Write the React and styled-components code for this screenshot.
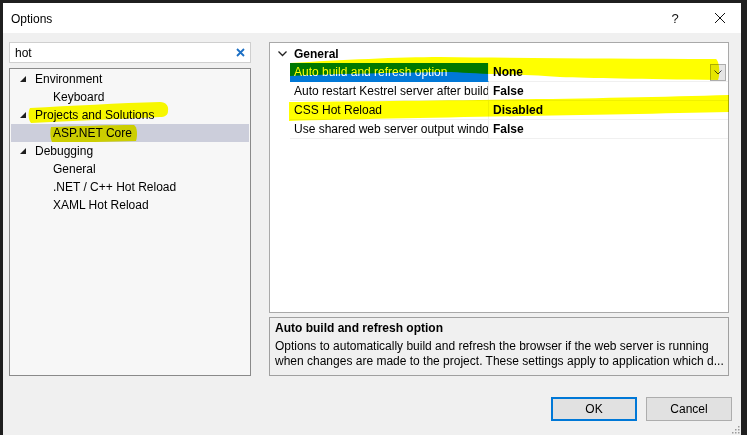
import React from "react";
import styled, { createGlobalStyle } from "styled-components";

const Global = createGlobalStyle`
  html, body { margin: 0; padding: 0; background: #1f1f1f; }
  body { font-family: "Liberation Sans", Arial, sans-serif; font-size: 12px; color: #000; }
  * { box-sizing: border-box; }
`;

const Screen = styled.div`
  position: relative;
  width: 747px;
  height: 435px;
  padding: 3px 6px 0 3px;
  overflow: hidden;
`;

const Dialog = styled.div`
  width: 738px;
  height: 432px;
  background: #f0f0f0;
  display: flex;
  flex-direction: column;
  position: relative;
`;

const TitleBar = styled.div`
  height: 30px;
  background: #ffffff;
  display: flex;
  align-items: center;
  padding-left: 8px;
  padding-right: 0;
`;

const TitleText = styled.div`
  flex: 1;
  font-size: 12px;
  padding-top: 1px;
`;

const TitleButton = styled.div`
  width: 45px;
  height: 30px;
  display: flex;
  align-items: center;
  justify-content: center;
  padding-left: ${(p) => p.$shift || 0}px;
  font-size: 13px;
  color: #111;
`;

const Body = styled.div`
  flex: 1;
  padding: 9px 12px 0 6px;
  display: flex;
  flex-direction: column;
`;

const Main = styled.div`
  display: grid;
  grid-template-columns: 242px 460px;
  column-gap: 18px;
  height: 334px;
`;

const Column = styled.div`
  display: flex;
  flex-direction: column;
  gap: ${(p) => p.$gap}px;
  min-height: 0;
`;

const Search = styled.div`
  height: 21px;
  background: #fff;
  border: 1px solid #cfcfcf;
  display: flex;
  align-items: center;
  padding: 0 5px 0 5px;
`;

const SearchText = styled.div`
  flex: 1;
  font-size: 12px;
`;

const Tree = styled.div`
  flex: 1;
  background: #f7f7f7;
  border: 1px solid #8a8a8a;
  padding: 1px 1px;
`;

const TreeRow = styled.div`
  height: 18px;
  display: flex;
  align-items: center;
  padding-left: ${(p) => (p.$child ? 42 : 0)}px;
  background: ${(p) => (p.$selected ? "#cccedb" : "transparent")};
  white-space: nowrap;
`;

const Expander = styled.span`
  width: 24px;
  height: 18px;
  display: flex;
  align-items: center;
  padding-left: 9px;
`;

const Grid = styled.div`
  flex: 1;
  background: #fff;
  border: 1px solid #a9a9a9;
  padding-top: 1px;
`;

const CategoryRow = styled.div`
  height: 19px;
  display: flex;
  align-items: center;
  font-weight: bold;
`;

const CategoryToggle = styled.span`
  width: 24px;
  display: flex;
  justify-content: center;
  padding-left: 1px;
`;

const PropRow = styled.div`
  height: 19px;
  display: grid;
  grid-template-columns: 20px 199px 1fr;
`;

const Margin = styled.div``;

const PropName = styled.div`
  display: flex;
  align-items: center;
  padding-left: 4px;
  white-space: nowrap;
  overflow: hidden;
  background: ${(p) => (p.$selected ? "#0078d7" : "transparent")};
  color: ${(p) => (p.$selected ? "#fff" : "#000")};
  border-bottom: 1px solid ${(p) => (p.$selected ? "#0078d7" : "#f0f0f0")};
  border-right: 1px solid #f0f0f0;
`;

const PropValue = styled.div`
  display: flex;
  align-items: center;
  padding-left: 4px;
  padding-right: 2px;
  font-weight: bold;
  border-bottom: 1px solid #f0f0f0;
`;

const ValueText = styled.span`
  flex: 1;
`;

const DropButton = styled.div`
  width: 16px;
  height: 17px;
  background: #e6e6e6;
  border: 1px solid #adadad;
  display: flex;
  align-items: center;
  justify-content: center;
`;

const Description = styled.div`
  height: 59px;
  border: 1px solid #a0a0a0;
  background: #f0f0f0;
  padding: 2px 5px 0 5px;
  line-height: 15px;
`;

const DescTitle = styled.div`
  font-weight: bold;
  height: 17px;
  line-height: 17px;
  margin-bottom: 2px;
`;

const DescLine = styled.div`
  white-space: nowrap;
  overflow: hidden;
`;

const ButtonRow = styled.div`
  margin-top: 21px;
  margin-right: -3px;
  display: flex;
  justify-content: flex-end;
  gap: 9px;
`;

const Button = styled.button`
  width: 86px;
  height: 24px;
  font-family: inherit;
  font-size: 12px;
  color: #000;
  background: #e1e1e1;
  border: ${(p) => (p.$default ? "2px solid #0078d7" : "1px solid #adadad")};
  padding: 0;
`;

const Grip = styled.svg`
  position: absolute;
  right: 1px;
  bottom: 1px;
`;

const Markers = styled.svg`
  position: absolute;
  left: 0;
  top: 0;
  pointer-events: none;
  mix-blend-mode: multiply;
`;

const Triangle = () => (
  <svg width="6" height="6" viewBox="0 0 6 6">
    <polygon points="6,0 6,6 0,6" fill="#1e1e1e" />
  </svg>
);

const treeItems = [
  { label: "Environment", parent: true },
  { label: "Keyboard" },
  { label: "Projects and Solutions", parent: true },
  { label: "ASP.NET Core", selected: true },
  { label: "Debugging", parent: true },
  { label: "General" },
  { label: ".NET / C++ Hot Reload" },
  { label: "XAML Hot Reload" },
];

const props = [
  { name: "Auto build and refresh option", value: "None", selected: true },
  { name: "Auto restart Kestrel server after build", value: "False" },
  { name: "CSS Hot Reload", value: "Disabled" },
  { name: "Use shared web server output window", value: "False" },
];

export default function App() {
  return (
    <>
      <Global />
      <Screen>
        <Dialog>
          <TitleBar>
            <TitleText>Options</TitleText>
            <TitleButton $shift={3}>?</TitleButton>
            <TitleButton $shift={3}>
              <svg width="12" height="12" viewBox="0 0 12 12">
                <path d="M1 1 L11 11 M11 1 L1 11" stroke="#111" strokeWidth="1" />
              </svg>
            </TitleButton>
          </TitleBar>
          <Body>
            <Main>
              <Column $gap={5}>
                <Search>
                  <SearchText>hot</SearchText>
                  <svg width="9" height="9" viewBox="0 0 9 9">
                    <path d="M1 1 L8 8 M8 1 L1 8" stroke="#1c6fc4" strokeWidth="1.8" />
                  </svg>
                </Search>
                <Tree>
                  {treeItems.map((it) =>
                    it.parent ? (
                      <TreeRow key={it.label}>
                        <Expander>
                          <Triangle />
                        </Expander>
                        {it.label}
                      </TreeRow>
                    ) : (
                      <TreeRow key={it.label} $child $selected={it.selected}>
                        {it.label}
                      </TreeRow>
                    )
                  )}
                </Tree>
              </Column>
              <Column $gap={4}>
                <Grid>
                  <CategoryRow>
                    <CategoryToggle>
                      <svg width="9" height="6" viewBox="0 0 9 6">
                        <path d="M0.5 0.5 L4.5 4.5 L8.5 0.5" stroke="#222" strokeWidth="1.3" fill="none" />
                      </svg>
                    </CategoryToggle>
                    General
                  </CategoryRow>
                  {props.map((p) => (
                    <PropRow key={p.name}>
                      <Margin />
                      <PropName $selected={p.selected}>{p.name}</PropName>
                      <PropValue>
                        <ValueText>{p.value}</ValueText>
                        {p.selected && (
                          <DropButton>
                            <svg width="8" height="5" viewBox="0 0 8 5">
                              <path d="M0.5 0.5 L4 4 L7.5 0.5" stroke="#444" strokeWidth="1" fill="none" />
                            </svg>
                          </DropButton>
                        )}
                      </PropValue>
                    </PropRow>
                  ))}
                </Grid>
                <Description>
                  <DescTitle>Auto build and refresh option</DescTitle>
                  <DescLine>
                    Options to automatically build and refresh the browser if the web server is running
                  </DescLine>
                  <DescLine>
                    when changes are made to the project. These settings apply to application which d...
                  </DescLine>
                </Description>
              </Column>
            </Main>
            <ButtonRow>
              <Button $default>OK</Button>
              <Button>Cancel</Button>
            </ButtonRow>
          </Body>
          <Grip width="8" height="8" viewBox="0 0 8 8">
            <g fill="#9a9a9a">
              <rect x="6" y="0" width="1.5" height="1.5" />
              <rect x="3" y="3" width="1.5" height="1.5" />
              <rect x="6" y="3" width="1.5" height="1.5" />
              <rect x="0" y="6" width="1.5" height="1.5" />
              <rect x="3" y="6" width="1.5" height="1.5" />
              <rect x="6" y="6" width="1.5" height="1.5" />
            </g>
          </Grip>
        </Dialog>
        <Markers width="747" height="435" viewBox="0 0 747 435">
          <g fill="#ffff00">
            <path d="M30,108 C70,106 120,103 160,102 C166,102 169,106 168,111 C168,115 165,117 160,117 C120,119 70,121 31,123 C28,120 28,111 30,108 Z" />
            <path d="M51,127 C80,126 110,125 134,125 C137,127 138,134 136,141 C110,142 80,142 52,142 C50,138 50,131 51,127 Z" />
            <path d="M290,63 C340,60 400,57 440,57 C520,58 620,59 716,59 C720,62 720,76 718,80 C640,79 590,78 560,77 C530,75 510,74 490,74 C470,73 455,72 440,72 C380,73 330,74 290,76 Z" />
            <path d="M289,102 C400,101 600,99 729,95 L729,112 C600,115 400,118 289,121 Z" />
          </g>
        </Markers>
      </Screen>
    </>
  );
}
